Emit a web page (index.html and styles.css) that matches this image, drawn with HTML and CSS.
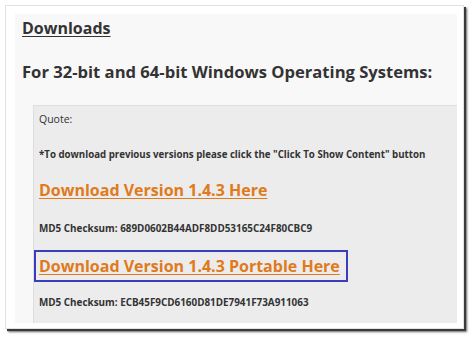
FILE: index.html
```html
<!DOCTYPE html>
<html>
<head>
<meta charset="utf-8">
<link rel="stylesheet" href="styles.css">
</head>
<body>
<div class="frame">
  <div class="panel">
    <h2 class="title">Downloads</h2>
    <h3 class="subtitle">For 32-bit and 64-bit Windows Operating Systems:</h3>
    <div class="quote">
      <div class="quote-label">Quote:</div>
      <p class="note">*To download previous versions please click the "Click To Show Content" button</p>
      <div class="dl"><a class="dl-link" href="#">Download Version 1.4.3 Here</a></div>
      <p class="md5 md5-first">MD5 Checksum: 689D0602B44ADF8DD53165C24F80CBC9</p>
      <div class="dl dl-boxed"><a class="dl-link" href="#">Download Version 1.4.3 Portable Here</a></div>
      <p class="md5 md5-last">MD5 Checksum: ECB45F9CD6160D81DE7941F73A911063</p>
    </div>
  </div>
</div>
</body>
</html>
```
FILE: styles.css
```css
html, body {
  margin: 0;
  padding: 0;
  background: #ffffff;
}
body {
  font-family: "Open Sans", "Liberation Sans", sans-serif;
  color: #333333;
  min-height: 338px;
  padding: 5px 0 0 5px;
  box-sizing: border-box;
}
.frame {
  width: 459px;
  height: 324px;
  box-sizing: border-box;
  border: 1px solid #e2e2e2;
  background: #ffffff;
  padding: 8px 6px 5px 9px;
  box-shadow: 2px 2px 0 #3a3a3a, 3px 3px 2px #666666;
  display: flex;
}
.panel {
  flex: 1;
  background: #f8f8f8;
  display: flex;
  flex-direction: column;
}
.title {
  margin: 0;
  padding: 3px 0 0 7px;
  font-size: 16px;
  line-height: 22px;
  font-weight: 700;
  text-decoration: underline;
  text-underline-offset: 2px;
  text-decoration-thickness: 1px;
}
.subtitle {
  margin: 0;
  padding: 21px 0 0 7px;
  font-size: 16.6px;
  line-height: 24px;
  font-weight: 700;
}
.quote {
  flex: 1;
  margin: 21px 0 0 18px;
  background: #ececec;
  border-top: 1px solid #dedede;
  border-left: 1px solid #dedede;
  padding: 5px 0 0 5px;
}
.quote-label {
  font-size: 10.5px;
  line-height: 16px;
}
.note {
  margin: 21px 0 0 0;
  font-size: 9.7px;
  line-height: 14px;
  font-weight: 700;
}
.dl {
  margin-top: 16px;
  display: inline-block;
}
.dl-link {
  color: #e07a1c;
  font-size: 16px;
  line-height: 24px;
  font-weight: 700;
  text-decoration: underline;
  text-decoration-thickness: 1px;
  text-underline-offset: 2px;
}
.md5 {
  font-size: 9.9px;
  line-height: 14px;
  font-weight: 700;
}
.md5-first {
  margin: 19px 0 0 0;
}
.md5-last {
  margin: 13px 0 0 0;
}
.dl-boxed {
  margin: 15px 0 0 -5px;
  padding: 2px 6px 2px 3px;
  border: 2px solid #3b3dbb;
}
```
